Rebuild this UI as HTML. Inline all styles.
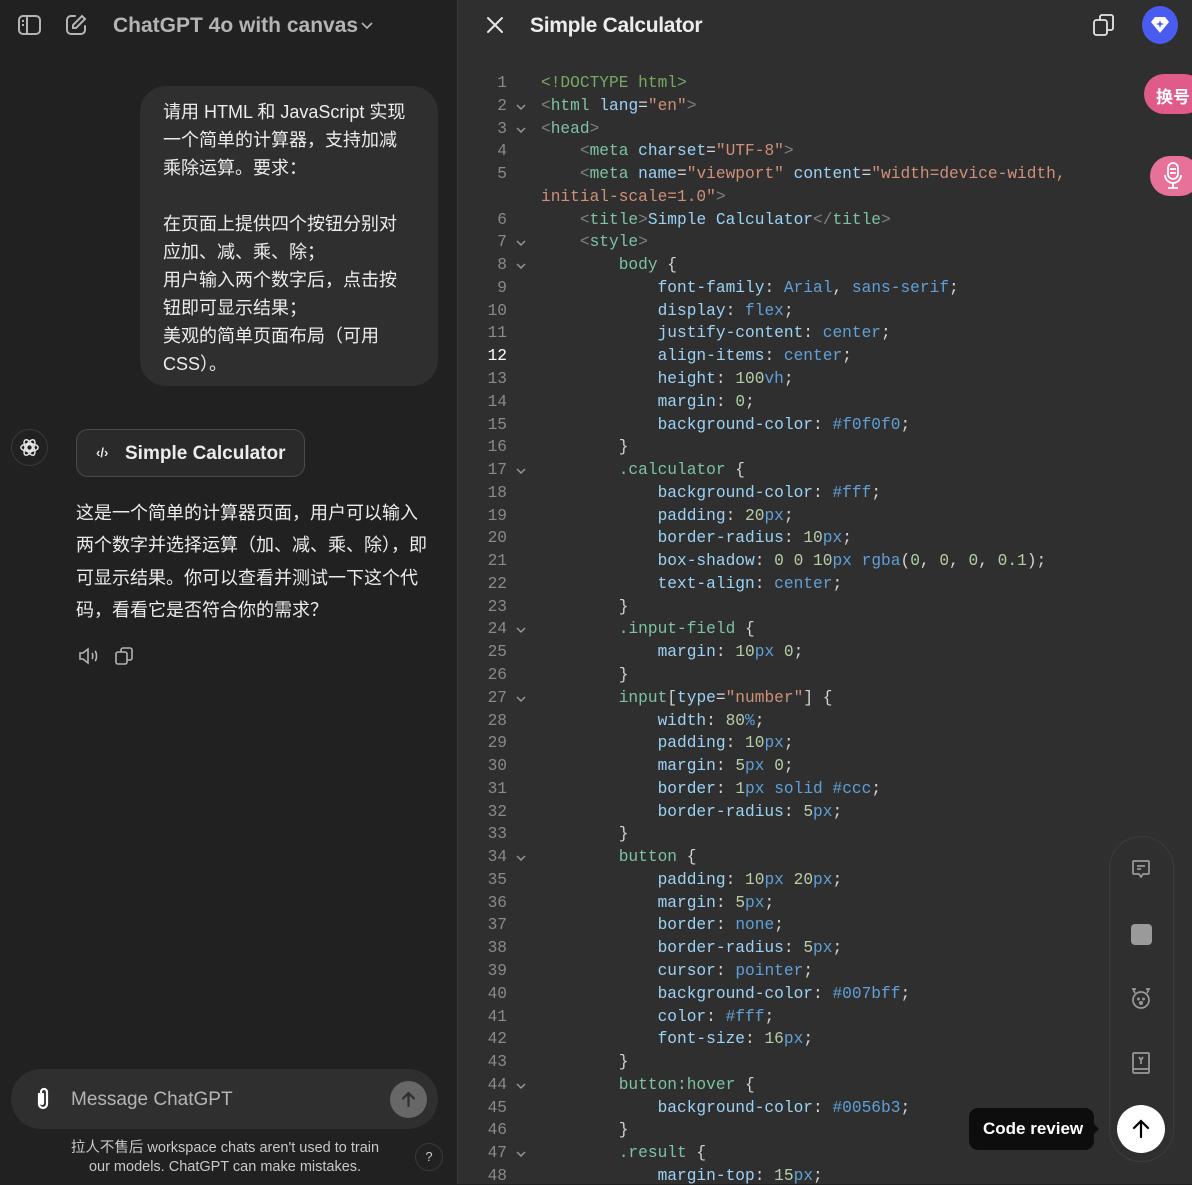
<!DOCTYPE html>
<html><head><meta charset="utf-8"><style>
*{margin:0;padding:0;box-sizing:border-box}
body{width:1192px;height:1184px;overflow:hidden;background:#212121;font-family:"Liberation Sans","Noto Sans CJK SC",sans-serif;color:#ececec;position:relative}
.abs{position:absolute}
#left{position:absolute;left:0;top:0;width:457px;height:1184px;background:#212121}
#right{position:absolute;left:457px;top:0;width:735px;height:1184px;background:#2f2f2f;border-left:1px solid #3a3a3a}
.ul{position:absolute;left:163px;font-size:18px;white-space:nowrap;color:#ececec}
.al{position:absolute;left:76px;font-size:18px;white-space:nowrap;color:#ececec}
.code{position:absolute;left:541px;font-family:"Liberation Mono",monospace;font-size:16.2px;white-space:pre;color:#d4d4d4}
.ln{position:absolute;width:50px;left:457px;text-align:right;font-family:"Liberation Mono",monospace;font-size:16.2px;color:#8a8a8a}
.fd{position:absolute;left:515px;width:12px;height:8px}
.t{color:#808080}.n{color:#7cc3a3}.a{color:#9cd2f5}.s{color:#ce9178}.p{color:#9cd2f5}.v{color:#5fa0d8}.m{color:#b5cea8}.d{color:#78a864}.g{color:#7cc3a3}
</style></head><body>
<div id="left">
 <svg class="abs" style="left:17px;top:13px" width="25" height="24" viewBox="0 0 25 24" fill="none" stroke="#b4b4b4" stroke-width="2"><rect x="2" y="3" width="21" height="18" rx="4"/><line x1="10" y1="3" x2="10" y2="21"/><line x1="5" y1="8" x2="7" y2="8"/><line x1="5" y1="12" x2="7" y2="12"/></svg>
 <svg class="abs" style="left:64px;top:13px" width="24" height="24" viewBox="0 0 24 24" fill="none" stroke="#b4b4b4" stroke-width="2" stroke-linecap="round"><path d="M11 3H7a4 4 0 0 0-4 4v10a4 4 0 0 0 4 4h10a4 4 0 0 0 4-4v-4"/><path d="M18 3l3 3-9 9H9v-3z"/></svg>
 <div class="abs" style="left:113px;top:14px;font-size:21px;font-weight:bold;color:#b4b4b4">ChatGPT 4o with canvas</div>
 <svg class="abs" style="left:360px;top:21px" width="14" height="10" viewBox="0 0 14 10" fill="none" stroke="#b4b4b4" stroke-width="1.6"><path d="M2 2l5 5 5-5"/></svg>
 <div class="abs" style="left:140px;top:86px;width:298px;height:300px;background:#2f2f2f;border-radius:26px"></div>
 <div class="ul" style="top:98px">请用 HTML 和 JavaScript 实现</div>
 <div class="ul" style="top:126px">一个简单的计算器，支持加减</div>
 <div class="ul" style="top:154px">乘除运算。要求：</div>
 <div class="ul" style="top:210px">在页面上提供四个按钮分别对</div>
 <div class="ul" style="top:238px">应加、减、乘、除；</div>
 <div class="ul" style="top:266px">用户输入两个数字后，点击按</div>
 <div class="ul" style="top:294px">钮即可显示结果；</div>
 <div class="ul" style="top:322px">美观的简单页面布局（可用</div>
 <div class="ul" style="top:350px">CSS）。</div>
 <div class="abs" style="left:11px;top:429px;width:37px;height:37px;border:1px solid #3a3a3a;border-radius:50%"></div>
 <svg class="abs" style="left:18px;top:436px" width="23" height="23" viewBox="0 0 24 24" fill="none" stroke="#e6e6e6" stroke-width="1.5"><circle cx="12" cy="12" r="3"/><ellipse cx="12" cy="12" rx="9" ry="4"/><ellipse cx="12" cy="12" rx="9" ry="4" transform="rotate(60 12 12)"/><ellipse cx="12" cy="12" rx="9" ry="4" transform="rotate(120 12 12)"/></svg>
 <div class="abs" style="left:76px;top:429px;width:229px;height:48px;border:1px solid #4a4a4a;border-radius:12px;background:#2a2a2a"></div>
 <div class="abs" style="left:96px;top:445px;font-size:13px;font-weight:bold;color:#e6e6e6">‹/›</div>
 <div class="abs" style="left:125px;top:443px;font-size:19px;font-weight:bold;color:#ececec">Simple Calculator</div>
 <div class="al" style="top:499px">这是一个简单的计算器页面，用户可以输入</div>
 <div class="al" style="top:531px">两个数字并选择运算（加、减、乘、除），即</div>
 <div class="al" style="top:564px">可显示结果。你可以查看并测试一下这个代</div>
 <div class="al" style="top:596px">码，看看它是否符合你的需求？</div>
 <svg class="abs" style="left:78px;top:646px" width="22" height="20" viewBox="0 0 22 20" fill="none" stroke="#b4b4b4" stroke-width="1.6"><path d="M2 7h3l5-4v14l-5-4H2z"/><path d="M14 7c1 1 1 5 0 6M17 5c2 2 2 8 0 10"/></svg>
 <svg class="abs" style="left:114px;top:646px" width="20" height="20" viewBox="0 0 20 20" fill="none" stroke="#b4b4b4" stroke-width="1.6"><rect x="2" y="6" width="11" height="12" rx="2"/><path d="M7 6V4a2 2 0 0 1 2-2h7a2 2 0 0 1 2 2v8a2 2 0 0 1-2 2h-3"/></svg>
 <div class="abs" style="left:11px;top:1069px;width:427px;height:60px;background:#2f2f2f;border-radius:30px"></div>
 <svg class="abs" style="left:33px;top:1086px" width="20" height="26" viewBox="0 0 20 26" fill="none" stroke="#fff" stroke-width="2.2" stroke-linecap="round"><path d="M6 8v10a4 4 0 0 0 8 0V6a3 3 0 0 0-6 0v11a1 1 0 0 0 2 0V8"/></svg>
 <div class="abs" style="left:71px;top:1089px;font-size:19px;color:#b4b4b4">Message ChatGPT</div>
 <div class="abs" style="left:390px;top:1081px;width:37px;height:37px;border-radius:50%;background:#676767"></div>
 <svg class="abs" style="left:398px;top:1089px" width="21" height="21" viewBox="0 0 21 21" fill="none" stroke="#2f2f2f" stroke-width="2.2" stroke-linecap="round"><path d="M10.5 17V4M5 9.5l5.5-5.5 5.5 5.5"/></svg>
 <div class="abs" style="left:0;width:450px;top:1139px;font-size:14.5px;color:#c8c8c8;text-align:center;line-height:19px">拉人不售后 workspace chats aren't used to train<br>our models. ChatGPT can make mistakes.</div>
 <div class="abs" style="left:415px;top:1143px;width:28px;height:28px;border:1px solid #3a3a3a;border-radius:50%;font-size:13px;text-align:center;line-height:26px;color:#c8c8c8">?</div>
</div>
<div id="right">
 <svg class="abs" style="left:27px;top:15px" width="20" height="20" viewBox="0 0 20 20" stroke="#e6e6e6" stroke-width="2" stroke-linecap="round"><path d="M3 3l14 14M17 3L3 17"/></svg>
 <div class="abs" style="left:72px;top:14px;font-size:21px;font-weight:bold;color:#ececec;letter-spacing:-0.3px">Simple Calculator</div>
 <svg class="abs" style="left:633px;top:12px" width="26" height="26" viewBox="0 0 26 26" fill="none" stroke="#e6e6e6" stroke-width="1.8"><rect x="3" y="8" width="13" height="15" rx="2.5"/><path d="M9 8V5a2 2 0 0 1 2-2h9a2 2 0 0 1 2 2v11a2 2 0 0 1-2 2h-4"/></svg>
 <div class="abs" style="left:684px;top:6px;width:36px;height:38px;border-radius:50%;background:#4a5cf0"></div>
 <svg class="abs" style="left:692px;top:15px" width="20" height="20" viewBox="0 0 20 20"><path d="M5 2h10l4 5-9 11L1 7z" fill="#fff"/><path d="M10 5l1 3 3 1-3 1-1 3-1-3-3-1 3-1z" fill="#4a5cf0"/></svg>
 <div class="abs" style="left:686px;top:74px;width:60px;height:40px;border-radius:20px;background:#e05a8a;color:#fff;font-size:17px;padding:9px 0 0 12px;font-weight:bold">换号</div>
 <div class="abs" style="left:692px;top:156px;width:50px;height:40px;border-radius:20px;background:#e8719a"></div>
 <svg class="abs" style="left:704px;top:161px" width="22" height="30" viewBox="0 0 22 30" fill="none" stroke="#fff" stroke-width="1.8"><rect x="6" y="2" width="10" height="16" rx="5"/><path d="M3 14a8 8 0 0 0 16 0M11 22v5M6 27h10M8 8h6M8 12h6"/></svg>
 <div class="abs" style="left:651px;top:836px;width:65px;height:326px;border:1px solid #3c3c3c;border-radius:33px;background:#2f2f2f"></div>
 <svg class="abs" style="left:672px;top:858px" width="22" height="22" viewBox="0 0 22 22" fill="none" stroke="#9a9a9a" stroke-width="1.7"><path d="M3 4a1 1 0 0 1 1-1h14a1 1 0 0 1 1 1v11a1 1 0 0 1-1 1h-5l-2 3-2-3H4a1 1 0 0 1-1-1z"/><path d="M7 8h8M7 11h4"/></svg>
 <div class="abs" style="left:673px;top:924px;width:21px;height:21px;border-radius:4px;background:#9a9a9a"></div>
 <svg class="abs" style="left:672px;top:986px" width="22" height="24" viewBox="0 0 22 24" fill="none" stroke="#9a9a9a" stroke-width="1.7"><circle cx="11" cy="14" r="8"/><path d="M5 7L3 3h3M17 7l2-4h-3"/><circle cx="8.5" cy="13" r=".6"/><circle cx="13.5" cy="13" r=".6"/><circle cx="11" cy="17" r="1.2"/></svg>
 <svg class="abs" style="left:673px;top:1051px" width="20" height="24" viewBox="0 0 20 24" fill="none" stroke="#9a9a9a" stroke-width="1.7"><rect x="2" y="2" width="16" height="20" rx="1"/><path d="M2 18h16M8 6l2 3 2-3M10 9v4"/></svg>
 <div class="abs" style="left:659px;top:1105px;width:48px;height:48px;border-radius:50%;background:#fff"></div>
 <svg class="abs" style="left:671px;top:1117px" width="24" height="24" viewBox="0 0 24 24" fill="none" stroke="#000" stroke-width="2.2" stroke-linecap="round"><path d="M12 20V4M5 11l7-7 7 7"/></svg>
 <div class="abs" style="left:511px;top:1108px;width:125px;height:42px;background:#0d0d0d;border-radius:9px;color:#fff;font-size:17px;font-weight:bold;padding:11px 0 0 14px">Code review</div>
 <div class="abs" style="left:635px;top:1123px;width:0;height:0;border-top:6px solid transparent;border-bottom:6px solid transparent;border-left:6px solid #0d0d0d"></div>
</div>
<div id="code"></div>
<script>
var L=[
'<span class="d">&lt;!DOCTYPE html&gt;</span>',
'<span class="t">&lt;</span><span class="n">html</span> <span class="a">lang</span>=<span class="s">"en"</span><span class="t">&gt;</span>',
'<span class="t">&lt;</span><span class="n">head</span><span class="t">&gt;</span>',
'    <span class="t">&lt;</span><span class="n">meta</span> <span class="a">charset</span>=<span class="s">"UTF-8"</span><span class="t">&gt;</span>',
'    <span class="t">&lt;</span><span class="n">meta</span> <span class="a">name</span>=<span class="s">"viewport"</span> <span class="a">content</span>=<span class="s">"width=device-width,</span>',
'<span class="s">initial-scale=1.0"</span><span class="t">&gt;</span>',
'    <span class="t">&lt;</span><span class="n">title</span><span class="t">&gt;</span><span class="a">Simple Calculator</span><span class="t">&lt;/</span><span class="n">title</span><span class="t">&gt;</span>',
'    <span class="t">&lt;</span><span class="n">style</span><span class="t">&gt;</span>',
'        <span class="g">body</span> {',
'            <span class="p">font-family</span>: <span class="v">Arial</span>, <span class="v">sans-serif</span>;',
'            <span class="p">display</span>: <span class="v">flex</span>;',
'            <span class="p">justify-content</span>: <span class="v">center</span>;',
'            <span class="p">align-items</span>: <span class="v">center</span>;',
'            <span class="p">height</span>: <span class="m">100</span><span class="v">vh</span>;',
'            <span class="p">margin</span>: <span class="m">0</span>;',
'            <span class="p">background-color</span>: <span class="v">#f0f0f0</span>;',
'        }',
'        <span class="g">.calculator</span> {',
'            <span class="p">background-color</span>: <span class="v">#fff</span>;',
'            <span class="p">padding</span>: <span class="m">20</span><span class="v">px</span>;',
'            <span class="p">border-radius</span>: <span class="m">10</span><span class="v">px</span>;',
'            <span class="p">box-shadow</span>: <span class="m">0 0 10</span><span class="v">px</span> <span class="v">rgba</span>(<span class="m">0</span>, <span class="m">0</span>, <span class="m">0</span>, <span class="m">0.1</span>);',
'            <span class="p">text-align</span>: <span class="v">center</span>;',
'        }',
'        <span class="g">.input-field</span> {',
'            <span class="p">margin</span>: <span class="m">10</span><span class="v">px</span> <span class="m">0</span>;',
'        }',
'        <span class="g">input</span>[<span class="p">type</span>=<span class="s">"number"</span>] {',
'            <span class="p">width</span>: <span class="m">80</span><span class="v">%</span>;',
'            <span class="p">padding</span>: <span class="m">10</span><span class="v">px</span>;',
'            <span class="p">margin</span>: <span class="m">5</span><span class="v">px</span> <span class="m">0</span>;',
'            <span class="p">border</span>: <span class="m">1</span><span class="v">px</span> <span class="v">solid</span> <span class="v">#ccc</span>;',
'            <span class="p">border-radius</span>: <span class="m">5</span><span class="v">px</span>;',
'        }',
'        <span class="g">button</span> {',
'            <span class="p">padding</span>: <span class="m">10</span><span class="v">px</span> <span class="m">20</span><span class="v">px</span>;',
'            <span class="p">margin</span>: <span class="m">5</span><span class="v">px</span>;',
'            <span class="p">border</span>: <span class="v">none</span>;',
'            <span class="p">border-radius</span>: <span class="m">5</span><span class="v">px</span>;',
'            <span class="p">cursor</span>: <span class="v">pointer</span>;',
'            <span class="p">background-color</span>: <span class="v">#007bff</span>;',
'            <span class="p">color</span>: <span class="v">#fff</span>;',
'            <span class="p">font-size</span>: <span class="m">16</span><span class="v">px</span>;',
'        }',
'        <span class="g">button:hover</span> {',
'            <span class="p">background-color</span>: <span class="v">#0056b3</span>;',
'        }',
'        <span class="g">.result</span> {',
'            <span class="p">margin-top</span>: <span class="m">15</span><span class="v">px</span>;'
];
var folds=[2,3,7,8,17,24,27,34,44,47];
var h='',n=1;
for(var i=0;i<L.length;i++){
 var y=82+i*22.77-8;
 h+='<div class="code" style="top:'+y+'px">'+L[i]+'</div>';
 if(i==5)continue;
 h+='<div class="ln" style="top:'+y+'px;'+(n==12?'color:#fff':'')+'">'+n+'</div>';
 if(folds.indexOf(n)>=0)h+='<svg class="fd" style="top:'+(y+6)+'px" viewBox="0 0 12 8" fill="none" stroke="#9a9a9a" stroke-width="1.4"><path d="M2 2l4 4 4-4"/></svg>';
 n++;
}
document.getElementById('code').innerHTML=h;
</script>
</body></html>
